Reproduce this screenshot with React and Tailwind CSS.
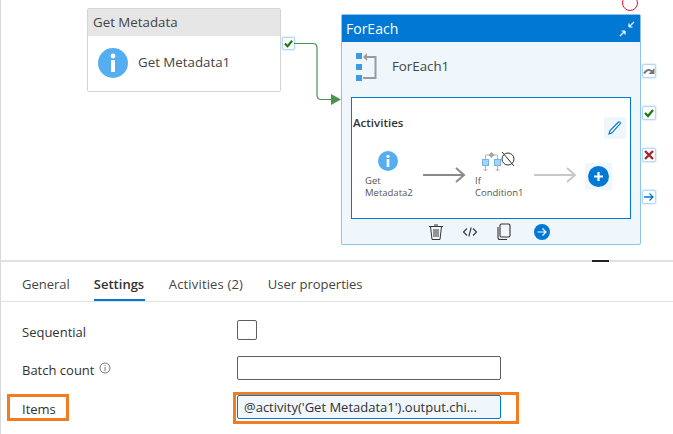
import React from 'react';

const InfoIcon = ({ size, className }) => (
  <svg width={size} height={size} viewBox="0 0 30 30" className={className}>
    <circle cx="15" cy="15" r="15" fill="#55aef2" />
    <circle cx="15" cy="8" r="2.4" fill="#fff" />
    <rect x="13" y="12" width="4" height="12" fill="#fff" />
  </svg>
);

const SideButton = ({ top, children }) => (
  <div
    className="absolute left-[642px] w-[14px] h-[14px] bg-white border border-[#b5d8f5] rounded-[2px] flex items-center justify-center shadow-[0_0_2px_#9ccbf0]"
    style={{ top }}
  >
    <svg width="12" height="12" viewBox="0 0 12 12">{children}</svg>
  </div>
);

const Arrow = ({ color, className }) => (
  <svg width="43" height="16" viewBox="0 0 43 16" fill="none" stroke={color} strokeWidth="2" className={className}>
    <path d="M0 8H41M33 1l8 7-8 7" />
  </svg>
);

const Tab = ({ label, active, className }) => (
  <div
    className={`h-[35px] pt-[5px] flex items-center whitespace-nowrap border-b-2 ${className} ${
      active ? 'border-[#0078d4] text-[#323130] font-semibold' : 'border-transparent text-[#444]'
    }`}
  >
    {label}
  </div>
);

const Row = ({ label, children, className }) => (
  <div className={`flex items-center ${className}`}>
    <div className="w-[215px] pt-[4px] leading-[16px] text-[#323130] font-medium">{label}</div>
    {children}
  </div>
);

export default function App() {
  return (
    <div className="w-[673px] h-[434px] bg-white overflow-hidden relative font-['Open_Sans','Noto_Sans',sans-serif] text-[13px]">
      <div className="absolute left-0 top-0 w-px h-full bg-[#d8d8d8]" />

      {/* pipeline canvas */}
      <div className="h-[260px] relative">
        <div className="absolute left-[622px] top-[-5px] w-[16px] h-[16px] rounded-full border border-[#e81123]" />

        <div className="absolute left-[87px] top-[8px] w-[194px] h-[84px] bg-white border border-[#d4d4d4] rounded-[2px]">
          <div className="h-[27px] bg-[#e6e6e6] px-[5px] pt-[1px] flex items-center text-[13.3px] text-[#444]">Get Metadata</div>
          <div className="flex items-center h-[53px] pl-[10px] gap-[10px] text-[13.3px] text-[#444]">
            <InfoIcon size={30} />
            <span>Get Metadata1</span>
          </div>
        </div>

        <div className="absolute left-[282px] top-[37px] w-[13px] h-[13px] bg-white border border-[#b5d8f5] rounded-[2px] flex items-center justify-center shadow-[0_0_2px_#9ccbf0]">
          <svg width="11" height="11" viewBox="0 0 12 12">
            <path d="M2 6l3 3 5-6" fill="none" stroke="#107c10" strokeWidth="2.2" />
          </svg>
        </div>

        <svg className="absolute left-[294px] top-[38px]" width="48" height="70" viewBox="0 0 48 70">
          <path d="M0 5.500H19Q23 5.500 23 10V57Q23 61.500 27 61.500H38" fill="none" stroke="#4a9450" strokeWidth="1.2" />
          <path d="M37 56l10 5.500-10 5.500z" fill="#4a9450" />
        </svg>

        <div className="absolute left-[341px] top-[14px] w-[300px] h-[231px] bg-[#eff6fc] border border-[#8cc4ee] rounded-[2px] flex flex-col">
          <div className="h-[27px] bg-[#0078d4] text-white text-[14px] px-[4px] flex items-center justify-between">
            <span>ForEach</span>
            <svg width="18" height="18" viewBox="0 0 18 18" stroke="#fff" strokeWidth="1.2" fill="#fff">
              <path d="M2 16l5-5M7 11H3.500M7 11v3.500" />
              <path d="M16 2l-5 5M11 7h3.500M11 7V3.500" />
            </svg>
          </div>
          <div className="h-[55px] pb-[6px] flex items-center pl-[13px] gap-[15px] text-[13.3px] text-[#444]">
            <svg width="22" height="28" viewBox="0 0 22 28">
              <rect x="1" y="0" width="6" height="6" fill="#3b9be3" />
              <rect x="1" y="11" width="6" height="6" fill="#3b9be3" />
              <rect x="1" y="22" width="6" height="6" fill="#3b9be3" />
              <path d="M11 4H20.500V25H8" fill="none" stroke="#9b9b9b" strokeWidth="2" />
              <path d="M12 0L8 4l4 4z" fill="#9b9b9b" />
            </svg>
            <span>ForEach1</span>
          </div>
          <div className="mx-[9px] h-[122px] bg-white border border-[#0078d4] relative">
            <div className="pt-[16px] pl-[1px] text-[11.5px] font-semibold text-[#333]">Activities</div>
            <div className="absolute right-[4px] top-[19px] w-[22px] h-[22px] bg-[#eff6fc] rounded-[2px] flex items-center justify-center">
              <svg width="16" height="16" viewBox="0 0 16 16" fill="none" stroke="#0078d4" strokeWidth="1.1">
                <path d="M2 14l1-3.500L11.500 2c.8-.8 2.500.8 1.700 1.700L5 12.800z" />
              </svg>
            </div>
            <div className="flex items-start pl-[13px] mt-[20px]">
              <div className="w-[58px] text-[9.5px] leading-[12px] text-[#555]">
                <InfoIcon size={20} className="ml-[13px] mb-[4px]" />
                Get<br />Metadata2
              </div>
              <Arrow color="#8a8a8a" className="mt-[16px]" />
              <div className="w-[59px] ml-[9px] text-[9.5px] leading-[12px] text-[#555]">
                <svg width="40" height="22" viewBox="0 0 40 22" className="ml-[3px] mb-[2px]">
                  <path d="M7.500 8V4H19.500V8" fill="none" stroke="#b5b5b5" strokeWidth="1" />
                  <path d="M13.500 1l3 3-3 3-3-3z" fill="#a5a5a5" />
                  <rect x="4.500" y="8.500" width="6" height="6" fill="#a9d3f5" stroke="#6fb3ea" />
                  <rect x="16.500" y="8.500" width="6" height="6" fill="#a9d3f5" stroke="#6fb3ea" />
                  <path d="M7.500 15v5M5.500 18l2 2 2-2M19.500 15v5M17.500 18l2 2 2-2" fill="none" stroke="#b5b5b5" strokeWidth="1" />
                  <circle cx="30" cy="8" r="6" fill="none" stroke="#333" strokeWidth="1" />
                  <path d="M24 1l12 14" stroke="#333" strokeWidth="1" />
                </svg>
                If<br />Condition1
              </div>
              <Arrow color="#c8c8c8" className="mt-[16px]" />
              <div className="w-[27px] h-[27px] mt-[12px] ml-[8px] bg-[#eff6fc] rounded-[2px] flex items-center justify-center">
                <svg width="21" height="21" viewBox="0 0 21 21">
                  <circle cx="10.500" cy="10.500" r="10.500" fill="#0078d4" />
                  <path d="M10.500 6v9M6 10.500h9" stroke="#fff" strokeWidth="2.2" />
                </svg>
              </div>
            </div>
          </div>
          <div className="flex-1 flex items-center pl-[85px] text-[#333]">
            <svg width="18" height="18" viewBox="0 0 18 18" fill="none" stroke="#333" strokeWidth="1">
              <path d="M2 3.500h14M3.500 3.500L5 16.500h8l1.500-13M7 2h4M7 6v8M9 6v8M11 6v8" />
            </svg>
            <svg width="16" height="16" viewBox="0 0 16 16" fill="none" stroke="#333" strokeWidth="1.1" className="ml-[17px]">
              <path d="M5 4.500L1.500 8 5 11.500M11 4.500L14.500 8 11 11.500M9.200 3.500L6.800 12.500" />
            </svg>
            <svg width="16" height="18" viewBox="0 0 16 18" fill="none" stroke="#333" strokeWidth="1.1" className="ml-[18px]">
              <rect x="4" y="1" width="10" height="13" rx="1.500" />
              <path d="M2 4v10.500A2 2 0 0 0 4 16.500h7" />
            </svg>
            <svg width="16" height="16" viewBox="0 0 16 16" className="ml-[22px]">
              <circle cx="8" cy="8" r="8" fill="#0078d4" />
              <path d="M3.500 8h8M8.500 4.500L12 8l-3.500 3.500" fill="none" stroke="#fff" strokeWidth="1.2" />
            </svg>
          </div>
        </div>

        <SideButton top={64}>
          <path d="M1 8.500q4-6 8-2" fill="none" stroke="#777" strokeWidth="2" />
          <path d="M11.500 3v6h-6z" fill="#777" />
        </SideButton>
        <SideButton top={106}>
          <path d="M2 6l3 3 5-6" fill="none" stroke="#107c10" strokeWidth="2.2" />
        </SideButton>
        <SideButton top={148}>
          <path d="M2 2l8 8M10 2l-8 8" fill="none" stroke="#a4262c" strokeWidth="2.4" />
        </SideButton>
        <SideButton top={190}>
          <path d="M1 6h9M6.500 2.500L10 6l-3.500 3.500" fill="none" stroke="#0078d4" strokeWidth="1.300" />
        </SideButton>
      </div>

      {/* properties panel */}
      <div className="h-[174px] border-t-2 border-[#e1e1e1] relative">
        <div className="absolute left-[592px] top-[-2px] w-[17px] h-[2px] bg-[#222]" />
        <div className="flex gap-[24px] pl-[22px] h-[40px] items-end border-b border-[#e1e1e1]">
          <Tab label="General" />
          <Tab label="Settings" active className="w-[51px]" />
          <Tab label="Activities (2)" className="w-[75px] tracking-[0.15px]" />
          <Tab label="User properties" />
        </div>
        <div className="pl-[22px] flex flex-col">
          <Row label="Sequential" className="mt-[18px]">
            <div className="w-[20px] h-[20px] border border-[#605e5c] rounded-[2px]" />
          </Row>
          <Row
            label={
              <span className="flex items-start gap-[5px]">
                Batch count
                <svg width="12" height="12" viewBox="0 0 12 12" fill="none" stroke="#555" strokeWidth="0.8">
                  <circle cx="6" cy="6" r="5" />
                  <path d="M6 5v4M6 3v1" />
                </svg>
              </span>
            }
            className="mt-[16px]"
          >
            <div className="w-[264px] h-[24px] border border-[#605e5c] rounded-[2px]" />
          </Row>
          <Row label="Items" className="mt-[15px]">
            <div className="w-[264px] h-[24px] pt-[1px] border border-[#0078d4] rounded-[2px] bg-[#eff6fc] px-[6px] flex items-center text-[#323130] font-medium">
              @activity('Get Metadata1').output.chi...
            </div>
          </Row>
        </div>
        {/* orange callouts */}
        <div className="absolute left-[7px] top-[132px] w-[62px] h-[27px] border-[3px] border-[#f47b20]" />
        <div className="absolute left-[233px] top-[130px] w-[286px] h-[32px] border-[3px] border-[#f47b20]" />
      </div>
    </div>
  );
}
